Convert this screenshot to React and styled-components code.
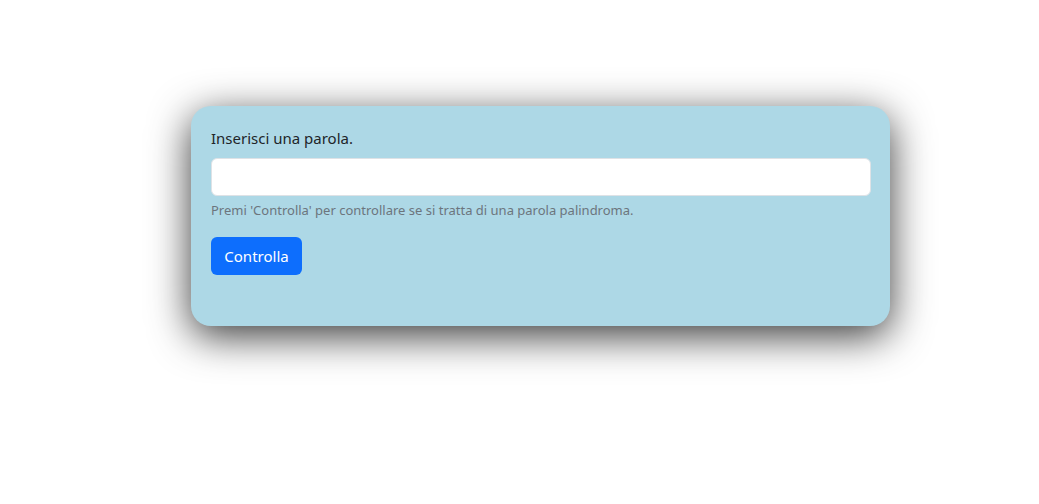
import React from "react";
import styled, { createGlobalStyle } from "styled-components";

const Global = createGlobalStyle`
  html, body { margin: 0; padding: 0; background: #fff; }
  body { font-family: "Noto Sans", "Open Sans", sans-serif; color: #212529; }
  * { box-sizing: border-box; }
`;

const Page = styled.div`
  min-height: 100vh;
  padding: 106px 0 0 191px;
`;

const Card = styled.div`
  width: 699px;
  background: #add8e6;
  border-radius: 20px;
  padding: 20px 19px 51px 20px;
  box-shadow: 0 10px 40px rgba(0, 0, 0, 0.78);
`;

const Label = styled.label`
  display: block;
  font-size: 15px;
  line-height: 24px;
  margin-bottom: 8px;
  color: #212529;
`;

const Input = styled.input`
  display: block;
  width: 100%;
  height: 38px;
  border: 1px solid #dee2e6;
  border-radius: 6px;
  background: #fff;
  padding: 6px 12px;
  font-size: 16px;
  font-family: inherit;
  outline: none;
`;

const Help = styled.div`
  margin-top: 4px;
  font-size: 13px;
  line-height: 21px;
  color: #6c757d;
`;

const Button = styled.button`
  margin-top: 16px;
  height: 38px;
  width: 91px;
  padding: 0;
  border: none;
  border-radius: 6px;
  background: #0d6efd;
  color: #fff;
  font-family: inherit;
  font-size: 15px;
  cursor: pointer;
`;

export default function App() {
  return (
    <>
      <Global />
      <Page>
        <Card>
          <Label htmlFor="parola">Inserisci una parola.</Label>
          <Input id="parola" type="text" />
          <Help>Premi 'Controlla' per controllare se si tratta di una parola palindroma.</Help>
          <Button>Controlla</Button>
        </Card>
      </Page>
    </>
  );
}
